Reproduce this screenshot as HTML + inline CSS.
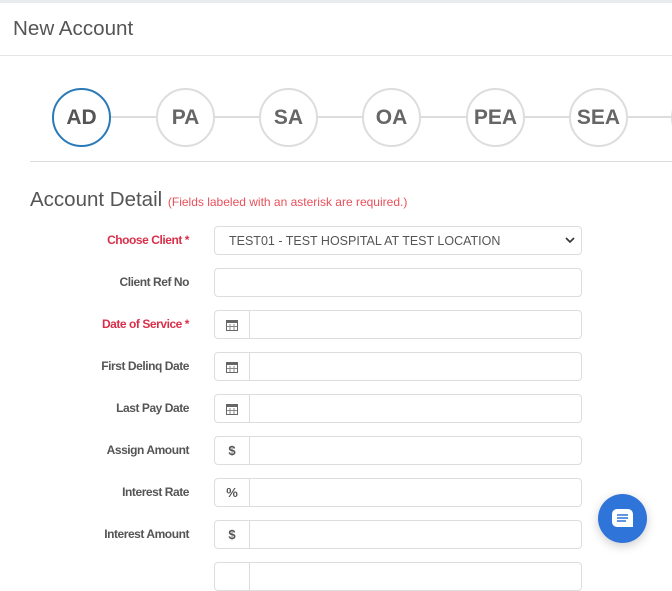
<!DOCTYPE html>
<html><head><meta charset="utf-8"><style>
*{box-sizing:border-box;margin:0;padding:0}
body{width:672px;height:567px;overflow:hidden;background:#fff;font-family:"Liberation Sans",Arial,sans-serif;position:relative}
.a{position:absolute}
.top{left:0;top:0;width:672px;height:3px;background:#e9ecef}
.title{left:13px;top:17px;font-size:20.6px;color:#555}
.sep1{left:0;top:55px;width:672px;height:1px;background:#e5e5e5}
.line{left:80px;top:116px;width:600px;height:2px;background:#ddd}
.c{width:59px;height:59px;border:2px solid #ddd;border-radius:50%;background:#fff;top:88px;display:flex;align-items:center;justify-content:center;font-weight:bold;font-size:21px;color:#666}
.sep2{left:30px;top:161px;width:642px;height:1px;background:#ddd}
.h{left:30px;top:188px;font-size:20.5px;color:#555}
.h span{font-size:12px;color:#e8505b}
.lbl{width:189px;left:0;text-align:right;font-size:12px;letter-spacing:-0.45px;font-weight:bold;color:#555}
.req{color:#d9304a}
.in{left:214px;width:368px;height:29px;border:1px solid #ddd;border-radius:4px;background:#fff}
.ad{position:absolute;left:0;top:0;width:35px;height:27px;border-right:1px solid #ddd;display:flex;align-items:center;justify-content:center;font-size:13px;font-weight:bold;color:#555}
.sel{font-size:12.5px;color:#555;padding:7px 0 0 14px}
.chat{left:598px;top:494px;width:49px;height:49px;border-radius:50%;background:#2f74d9;box-shadow:0 3px 10px rgba(0,0,0,.2)}
</style></head><body>
<div class="a top"></div>
<div class="a title">New Account</div>
<div class="a sep1"></div>
<div class="a line"></div>
<div class="a c" style="left:52px;border-color:#2a7ab8;color:#555">AD</div>
<div class="a c" style="left:156px">PA</div>
<div class="a c" style="left:259px">SA</div>
<div class="a c" style="left:362px">OA</div>
<div class="a c" style="left:466px">PEA</div>
<div class="a c" style="left:569px">SEA</div>
<div class="a c" style="left:671px"></div>
<div class="a sep2"></div>
<div class="a h">Account Detail <span>(Fields labeled with an asterisk are required.)</span></div>

<div class="a lbl req" style="top:233px">Choose Client *</div>
<div class="a in sel" style="top:226px">TEST01 - TEST HOSPITAL AT TEST LOCATION<svg style="position:absolute;right:6px;top:10px" width="10" height="7" viewBox="0 0 10 7"><path d="M1 1l4 4 4-4" stroke="#333" stroke-width="1.6" fill="none"/></svg></div>

<div class="a lbl" style="top:275px">Client Ref No</div>
<div class="a in" style="top:268px"></div>

<div class="a lbl req" style="top:317px">Date of Service *</div>
<div class="a in" style="top:310px"><div class="ad"><svg width="12" height="12" viewBox="0 0 12 12"><rect x="0.5" y="1.5" width="11" height="10" fill="#fff" stroke="#666"/><rect x="0.5" y="1.5" width="11" height="2.5" fill="#666"/><path d="M4 5v6M8 5v6M1 7.5h10" stroke="#888"/></svg></div></div>

<div class="a lbl" style="top:359px">First Delinq Date</div>
<div class="a in" style="top:352px"><div class="ad"><svg width="12" height="12" viewBox="0 0 12 12"><rect x="0.5" y="1.5" width="11" height="10" fill="#fff" stroke="#666"/><rect x="0.5" y="1.5" width="11" height="2.5" fill="#666"/><path d="M4 5v6M8 5v6M1 7.5h10" stroke="#888"/></svg></div></div>

<div class="a lbl" style="top:401px">Last Pay Date</div>
<div class="a in" style="top:394px"><div class="ad"><svg width="12" height="12" viewBox="0 0 12 12"><rect x="0.5" y="1.5" width="11" height="10" fill="#fff" stroke="#666"/><rect x="0.5" y="1.5" width="11" height="2.5" fill="#666"/><path d="M4 5v6M8 5v6M1 7.5h10" stroke="#888"/></svg></div></div>

<div class="a lbl" style="top:443px">Assign Amount</div>
<div class="a in" style="top:436px"><div class="ad">$</div></div>

<div class="a lbl" style="top:485px">Interest Rate</div>
<div class="a in" style="top:478px"><div class="ad">%</div></div>

<div class="a lbl" style="top:527px">Interest Amount</div>
<div class="a in" style="top:520px"><div class="ad">$</div></div>

<div class="a in" style="top:562px"><div class="ad"></div></div>

<div class="a chat"><svg style="position:absolute;left:13px;top:14px" width="23" height="20" viewBox="0 0 23 20"><path d="M6 1h11a5 5 0 0 1 5 5v13h-16a5 5 0 0 1-5-5v-8a5 5 0 0 1 5-5z" fill="#fff"/><path d="M6 7h11M6 10h11M6 13h9" stroke="#2f74d9" stroke-width="1.6"/></svg></div>
</body></html>
